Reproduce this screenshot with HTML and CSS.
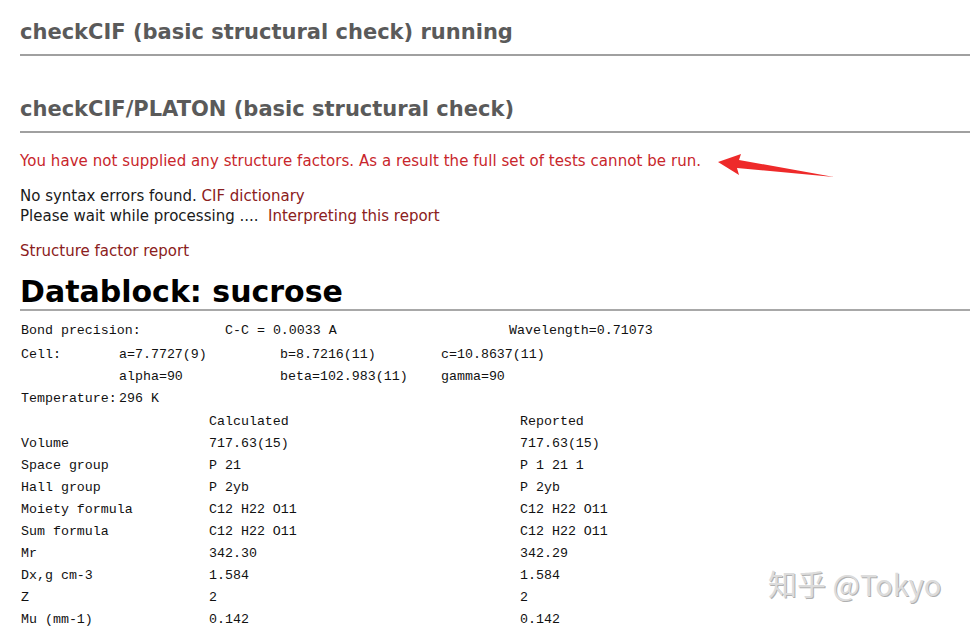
FILE: index.html
```html
<!DOCTYPE html>
<html>
<head>
<meta charset="utf-8">
<link rel="stylesheet" href="styles.css">
</head>
<body>
<div class="page">
  <h2 class="sect first">checkCIF (basic structural check) running</h2>
  <h2 class="sect second">checkCIF/PLATON (basic structural check)</h2>
  <p class="warn">You have not supplied any structure factors. As a result the full set of tests cannot be run.</p>
  <p class="info">No syntax errors found. <a class="lnk">CIF dictionary</a><br>Please wait while processing .... &nbsp;<a class="lnk">Interpreting this report</a></p>
  <p class="info sf"><a class="lnk">Structure factor report</a></p>
  <h1 class="datablock">Datablock: sucrose</h1>
  <div class="data">
    <div class="row r-first"><span class="w204">Bond precision:</span><span class="w284">C-C = 0.0033 A</span><span>Wavelength=0.71073</span></div>
    <div class="row"><span class="w98">Cell:</span><span class="w161">a=7.7727(9)</span><span class="w161">b=8.7216(11)</span><span>c=10.8637(11)</span></div>
    <div class="row"><span class="w98"></span><span class="w161">alpha=90</span><span class="w161">beta=102.983(11)</span><span>gamma=90</span></div>
    <div class="row"><span class="w98">Temperature:</span><span>296 K</span></div>
    <div class="row r-gap"><span class="w188"></span><span class="w311">Calculated</span><span>Reported</span></div>
    <div class="row"><span class="w188">Volume</span><span class="w311">717.63(15)</span><span>717.63(15)</span></div>
    <div class="row"><span class="w188">Space group</span><span class="w311">P 21</span><span>P 1 21 1</span></div>
    <div class="row"><span class="w188">Hall group</span><span class="w311">P 2yb</span><span>P 2yb</span></div>
    <div class="row"><span class="w188">Moiety formula</span><span class="w311">C12 H22 O11</span><span>C12 H22 O11</span></div>
    <div class="row"><span class="w188">Sum formula</span><span class="w311">C12 H22 O11</span><span>C12 H22 O11</span></div>
    <div class="row"><span class="w188">Mr</span><span class="w311">342.30</span><span>342.29</span></div>
    <div class="row"><span class="w188">Dx,g cm-3</span><span class="w311">1.584</span><span>1.584</span></div>
    <div class="row"><span class="w188">Z</span><span class="w311">2</span><span>2</span></div>
    <div class="row"><span class="w188">Mu (mm-1)</span><span class="w311">0.142</span><span>0.142</span></div>
  </div>
</div>
<svg class="arrow" width="130" height="40" viewBox="710 145 130 40">
  <polygon points="718,162 741,154 739,160 834,177 737,168 739,175" fill="#ee2a2a"/>
</svg>
<div class="watermark">知乎 @Tokyo</div>
</body>
</html>
```
FILE: styles.css
```css
html, body {
  margin: 0;
  padding: 0;
  background: #ffffff;
  overflow: hidden;
}
body {
  font-family: "DejaVu Sans", Verdana, sans-serif;
  font-size: 15px;
  color: #1a1a1a;
}
.page {
  padding: 0 0 0 20px;
}
.sect {
  margin: 0;
  font-size: 21px;
  line-height: 26px;
  font-weight: bold;
  color: #5a5a5a;
  padding-bottom: 9px;
  border-bottom: 2px solid #a0a0a0;
}
.sect.first { margin-top: 19px; }
.sect.second { margin-top: 40px; }
.warn {
  margin: 18px 0 0;
  line-height: 20px;
  color: #c8262b;
  letter-spacing: 0.06px;
}
.info {
  margin: 15px 0 0;
  line-height: 20px;
}
.lnk {
  color: #8b2020;
  text-decoration: none;
}
.datablock {
  margin: 13px 0 0;
  font-size: 30px;
  line-height: 35px;
  font-weight: bold;
  color: #000;
  border-bottom: 2px solid #a8a8a8;
}
.data {
  margin-top: 9px;
  font-family: "Liberation Mono", "DejaVu Sans Mono", monospace;
  font-size: 13.3px;
  color: #111;
}
.row {
  display: flex;
  height: 22px;
  line-height: 22px;
  white-space: pre;
  padding-left: 1px;
}
.row.r-first { margin-bottom: 2px; }
.row.r-gap { margin-top: 1px; }
.w204 { width: 204px; }
.w284 { width: 284px; }
.w98 { width: 98px; }
.w161 { width: 161px; }
.w188 { width: 188px; }
.w311 { width: 311px; }
.arrow {
  position: absolute;
  left: 710px;
  top: 145px;
}
.watermark {
  position: absolute;
  left: 768px;
  top: 564px;
  font-family: "Noto Sans CJK SC", "Noto Sans", sans-serif;
  font-size: 29px;
  line-height: 38px;
  color: #dcdcdc;
  text-shadow: 1px 1px 0 #b0b0b0;
}
```
